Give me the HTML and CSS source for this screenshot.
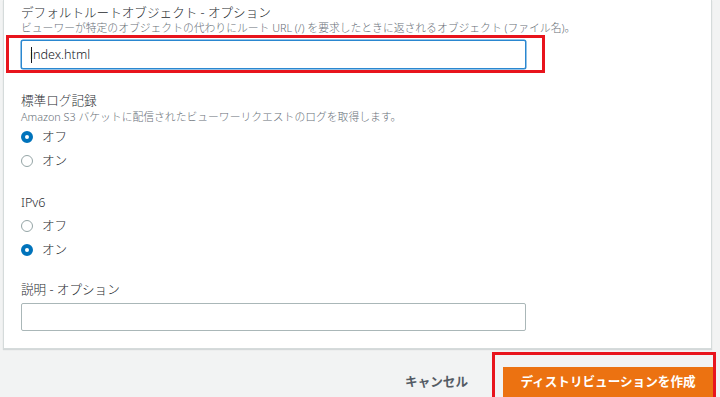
FILE: index.html
```html
<!DOCTYPE html>
<html lang="ja">
<head>
<meta charset="utf-8">
<link rel="stylesheet" href="styles.css">
</head>
<body>
<div class="card">
  <div class="field f1">
    <div class="label">デフォルトルートオブジェクト - オプション</div>
    <div class="desc">ビューワーが特定のオブジェクトの代わりにルート URL (/) を要求したときに返されるオブジェクト (ファイル名)。</div>
    <div class="input-wrap">
      <div class="input focused"><span class="caret"></span>index.html</div>
      <div class="mark mark-input"></div>
    </div>
  </div>
  <div class="field f2">
    <div class="label">標準ログ記録</div>
    <div class="desc">Amazon S3 バケットに配信されたビューワーリクエストのログを取得します。</div>
    <div class="radios">
      <div class="radio-row"><span class="radio on"></span><span class="rlabel">オフ</span></div>
      <div class="radio-row"><span class="radio"></span><span class="rlabel">オン</span></div>
    </div>
  </div>
  <div class="field f3">
    <div class="label">IPv6</div>
    <div class="radios">
      <div class="radio-row"><span class="radio"></span><span class="rlabel">オフ</span></div>
      <div class="radio-row"><span class="radio on"></span><span class="rlabel">オン</span></div>
    </div>
  </div>
  <div class="field f4">
    <div class="label">説明 - オプション</div>
    <div class="input plain"></div>
  </div>
</div>
<div class="footer">
  <span class="cancel">キャンセル</span>
  <div class="btn-wrap">
    <span class="primary">ディストリビューションを作成</span>
    <div class="mark mark-btn"></div>
  </div>
</div>
</body>
</html>
```

FILE: styles.css
```css
html, body {
  margin: 0;
  padding: 0;
}
body {
  background: #f2f3f3;
  width: 720px;
  height: 397px;
  overflow: hidden;
  font-family: "Noto Sans", "Noto Sans CJK JP", sans-serif;
  color: #16191f;
}
.card {
  margin-left: 3px;
  width: 709px;
  background: #ffffff;
  border: 1px solid #d5dbdb;
  border-top: none;
  padding: 5px 0 17px 17px;
  box-sizing: border-box;
  box-shadow: 0 1px 1px rgba(0,28,36,0.12);
}
.label {
  font-size: 12.6px;
  line-height: 16px;
  height: 16px;
  font-weight: 300;
  color: #272b30;
  white-space: nowrap;
}
.desc {
  font-size: 10.8px;
  line-height: 13px;
  height: 13px;
  font-weight: 300;
  color: #687078;
  white-space: nowrap;
}
.f1 .desc { margin-top: 0; }
.f2 .desc { margin-top: 1px; }
.input-wrap {
  position: relative;
  margin-top: 6px;
  width: 505px;
}
.input {
  box-sizing: border-box;
  width: 505px;
  height: 29px;
  border: 1px solid #aab7b8;
  border-radius: 2px;
  background: #fff;
  font-size: 12.6px;
  line-height: 27px;
  font-weight: 300;
  padding-left: 8px;
  color: #16191f;
  position: relative;
}
.input.focused {
  border-color: #2a87d0;
  box-shadow: 0 0 0 0.5px #2a87d0;
}
.caret {
  position: absolute;
  left: 9px;
  top: 6px;
  width: 1px;
  height: 16px;
  background: #16191f;
}
.input.plain {
  height: 28px;
  margin-top: 5px;
}
.mark {
  position: absolute;
  border: 3px solid #e8141c;
  pointer-events: none;
}
.mark-input {
  left: -15px;
  top: -5px;
  right: -19px;
  bottom: -4px;
}
.f2 { margin-top: 24px; }
.f3 { margin-top: 22px; }
.f4 { margin-top: 20px; }
.f2 .radios { margin-top: 2px; }
.f3 .radios { margin-top: 3px; }
.radio-row {
  display: flex;
  align-items: center;
  height: 24px;
}
.radio {
  box-sizing: border-box;
  width: 12px;
  height: 12px;
  border: 1px solid #95a5a6;
  border-radius: 50%;
  background: #fff;
  flex: none;
}
.radio.on {
  border: 4px solid #0073bb;
  background: #fff;
}
.rlabel {
  margin-left: 9px;
  font-size: 12.6px;
  line-height: 16px;
  font-weight: 300;
  color: #272b30;
}
.footer {
  display: flex;
  justify-content: flex-end;
  align-items: flex-start;
  padding: 18px 7px 0 0;
  gap: 35px;
}
.cancel {
  font-size: 12.6px;
  font-weight: bold;
  color: #545b64;
  line-height: 30px;
}
.btn-wrap {
  position: relative;
}
.primary {
  display: block;
  width: 210px;
  height: 30px;
  box-sizing: border-box;
  background: #ec7211;
  color: #fff;
  font-size: 12.6px;
  font-weight: bold;
  line-height: 30px;
  text-align: center;
}
.mark-btn {
  left: -11px;
  top: -15px;
  right: -3px;
  bottom: -4px;
}
```
